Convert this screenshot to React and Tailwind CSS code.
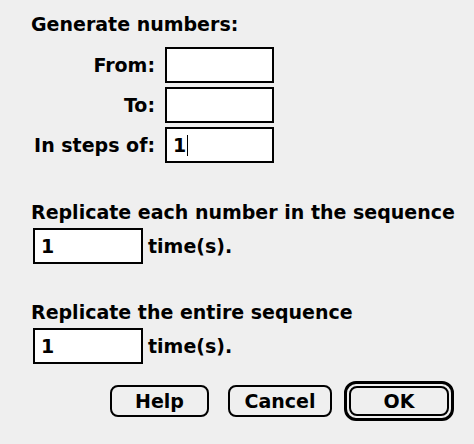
export default function App() {
  const font = { fontFamily: '"DejaVu Sans", sans-serif' };

  const Field = ({ value, caret, className = "" }) => (
    <div className={`h-9 border-2 border-black bg-white flex items-center pl-[6px] ${className}`}>
      {value && <span className="leading-none">{value}</span>}
      {caret && <span className="ml-[1px] w-px h-[21px] bg-black" />}
    </div>
  );

  return (
    <div
      className="w-[474px] h-[444px] bg-[#efefef] text-black font-bold text-[19px] leading-6 pl-[31px] pt-3 overflow-hidden"
      style={font}
    >
      <div>Generate numbers:</div>

      <div className="mt-[11px] flex flex-col gap-1">
        {[
          ["From:", ""],
          ["To:", ""],
          ["In steps of:", "1"],
        ].map(([label, value], i) => (
          <div key={label} className="flex items-center gap-[10px]">
            <div className="w-[124px] text-right whitespace-nowrap">{label}</div>
            <Field value={value} caret={i === 2} className="w-[109px]" />
          </div>
        ))}
      </div>

      <div className="mt-[37px] whitespace-nowrap">Replicate each number in the sequence</div>
      <div className="mt-1 flex items-center gap-[5px] ml-[2px]">
        <Field value="1" className="w-[110px]" />
        <span>time(s).</span>
      </div>

      <div className="mt-9 whitespace-nowrap">Replicate the entire sequence</div>
      <div className="mt-1 flex items-center gap-[5px] ml-[2px]">
        <Field value="1" className="w-[110px]" />
        <span>time(s).</span>
      </div>

      <div className="mt-[17px] ml-[79px] flex items-center">
        <button className="w-[99px] h-8 border-2 border-black rounded-lg bg-[#efefef] font-bold">
          Help
        </button>
        <button className="ml-[19px] w-[104px] h-8 border-2 border-black rounded-lg bg-[#efefef] font-bold">
          Cancel
        </button>
        <div className="ml-3 w-[110px] h-10 border-[3px] border-black rounded-xl p-[2px]">
          <button className="w-full h-full border-2 border-black rounded-lg bg-[#efefef] font-bold">
            OK
          </button>
        </div>
      </div>
    </div>
  );
}
